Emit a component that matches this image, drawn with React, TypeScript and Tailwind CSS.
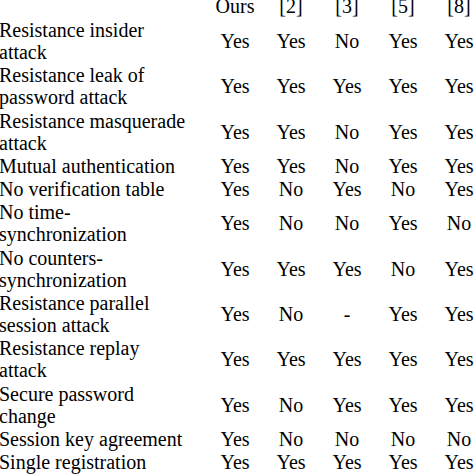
import React from "react";

type Row = {
  label: string[];
  values: string[];
};

const columns = ["Ours", "[2]", "[3]", "[5]", "[8]"];

const rows: Row[] = [
  { label: ["Resistance insider", "attack"], values: ["Yes", "Yes", "No", "Yes", "Yes"] },
  { label: ["Resistance leak of", "password attack"], values: ["Yes", "Yes", "Yes", "Yes", "Yes"] },
  { label: ["Resistance masquerade", "attack"], values: ["Yes", "Yes", "No", "Yes", "Yes"] },
  { label: ["Mutual authentication"], values: ["Yes", "Yes", "No", "Yes", "Yes"] },
  { label: ["No verification table"], values: ["Yes", "No", "Yes", "No", "Yes"] },
  { label: ["No time-", "synchronization"], values: ["Yes", "No", "No", "Yes", "No"] },
  { label: ["No counters-", "synchronization"], values: ["Yes", "Yes", "Yes", "No", "Yes"] },
  { label: ["Resistance parallel", "session attack"], values: ["Yes", "No", "-", "Yes", "Yes"] },
  { label: ["Resistance replay", "attack"], values: ["Yes", "Yes", "Yes", "Yes", "Yes"] },
  { label: ["Secure password", "change"], values: ["Yes", "No", "Yes", "Yes", "Yes"] },
  { label: ["Session key agreement"], values: ["Yes", "No", "No", "No", "No"] },
  { label: ["Single registration"], values: ["Yes", "Yes", "Yes", "Yes", "Yes"] },
];

const App = () => {
  return (
    <div className="w-[474px] h-[476px] overflow-hidden bg-white text-black">
      <div
        className="mt-[-5px] ml-[-1px] w-[490px] text-[20px] leading-[22px]"
        style={{ fontFamily: '"Liberation Serif", "Times New Roman", serif' }}
      >
        {/* header */}
        <div className="grid grid-cols-[208px_56px_56px_56px_56px_56px] h-[24px]">
          <div></div>
          {columns.map((c) => (
            <div key={c} className="text-center">
              {c}
            </div>
          ))}
        </div>

        <div className="flex flex-col gap-y-[1.3px]">
          {rows.map((row, i) => (
            <div key={i} className="grid grid-cols-[208px_56px_56px_56px_56px_56px] items-center">
              <div className="whitespace-nowrap">
                {row.label.map((line, j) => (
                  <div key={j}>{line}</div>
                ))}
              </div>
              {row.values.map((v, j) => (
                <div key={j} className="text-center">
                  {v}
                </div>
              ))}
            </div>
          ))}
        </div>
      </div>
    </div>
  );
};

export default App;
